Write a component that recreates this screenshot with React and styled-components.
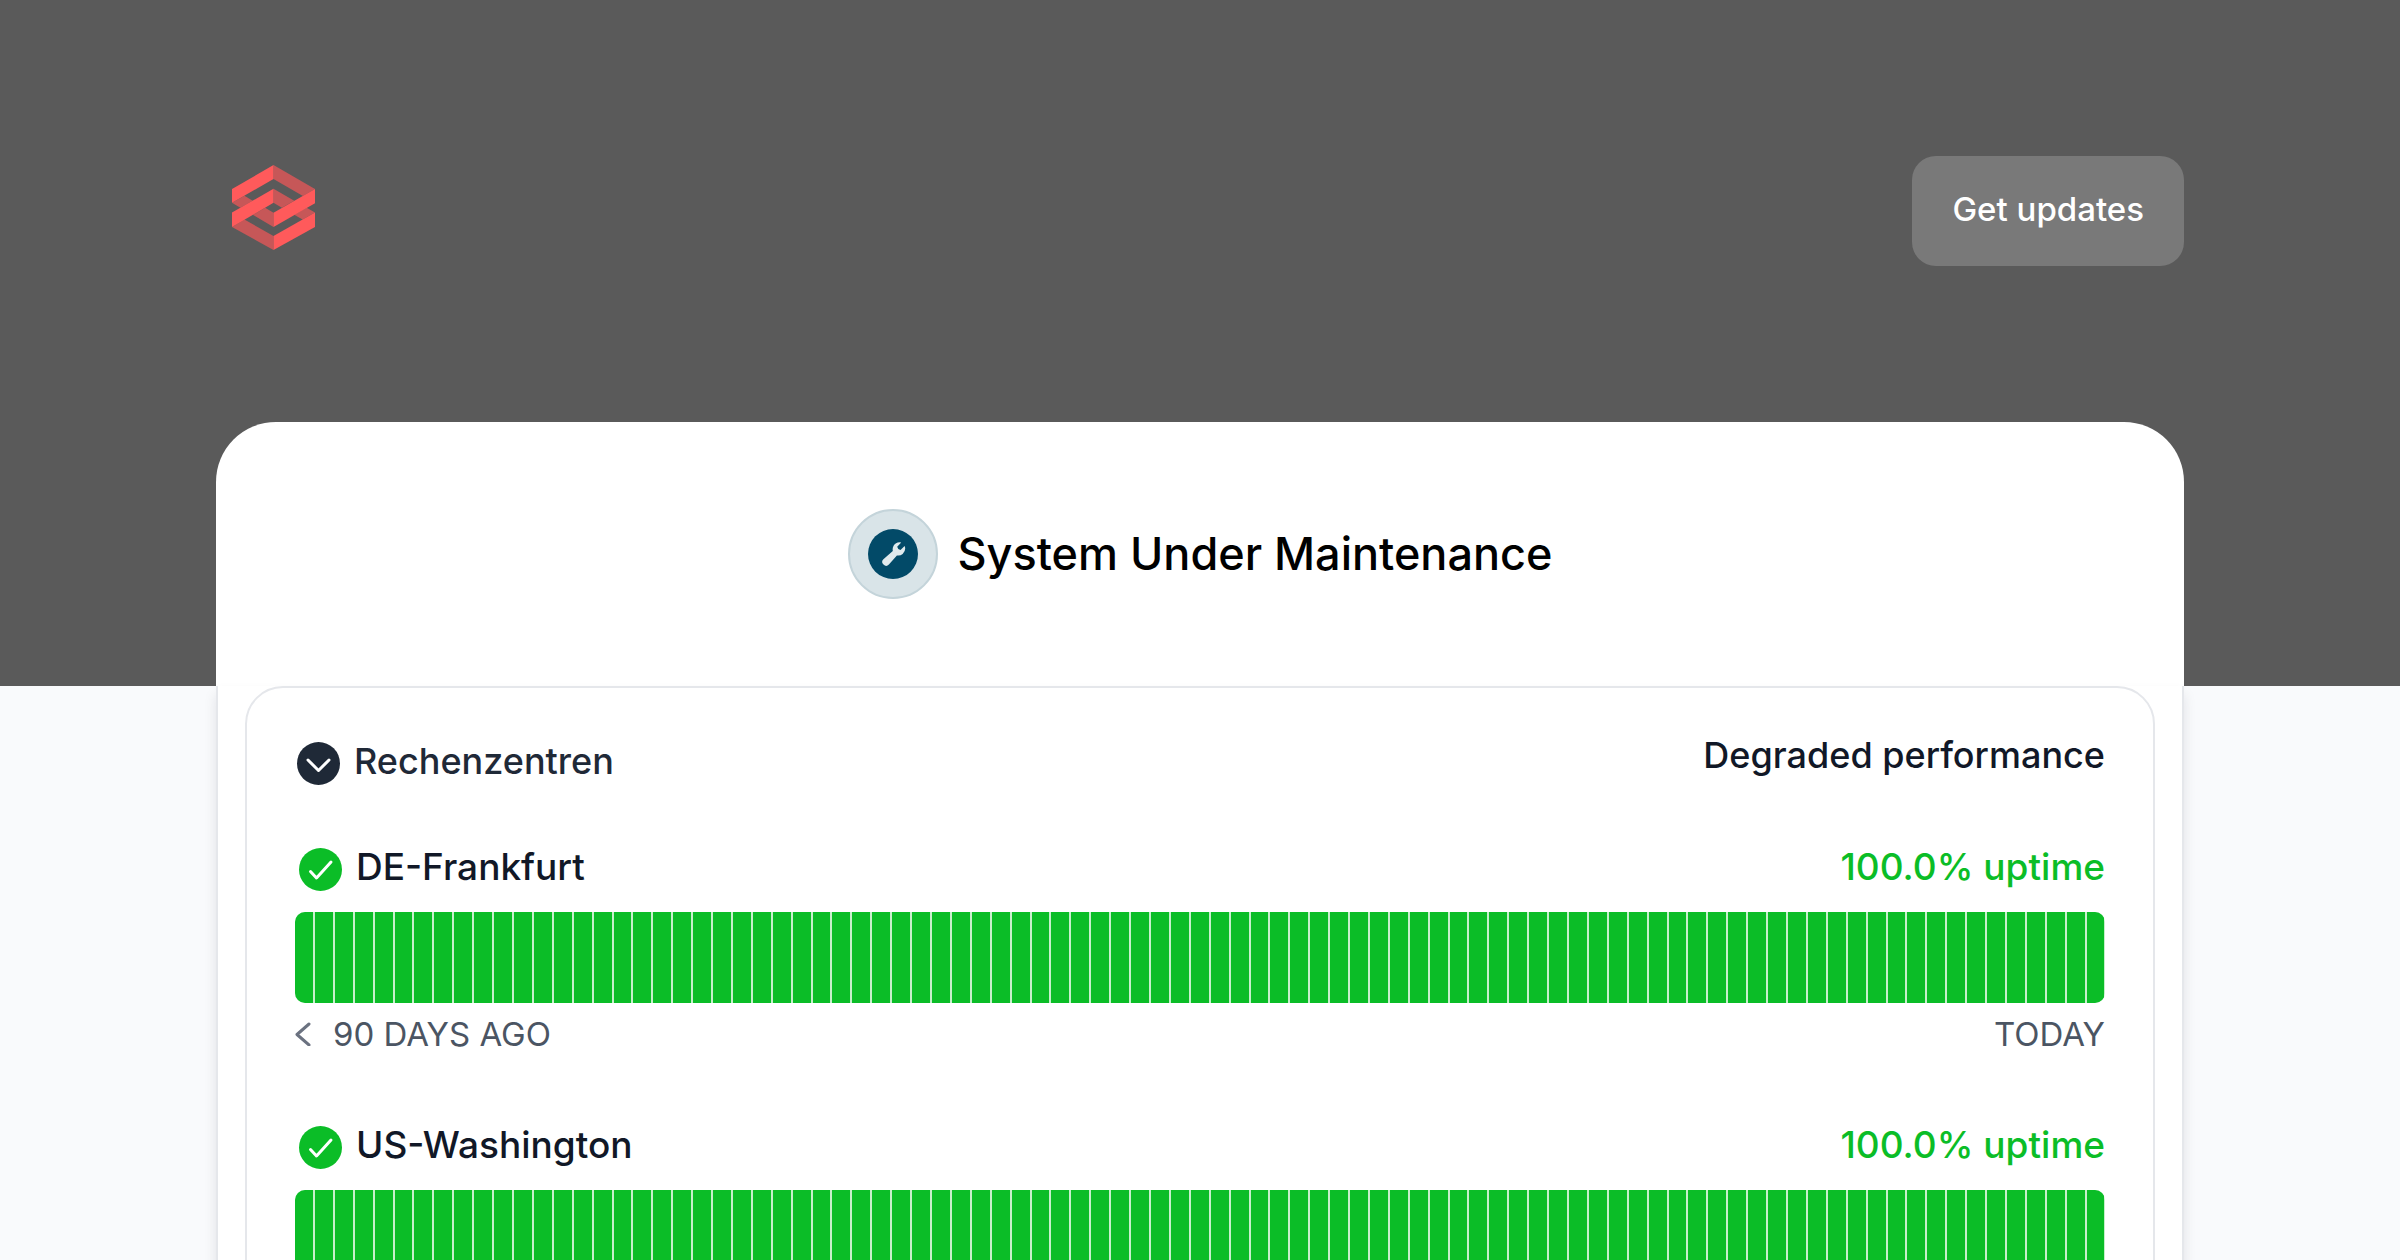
import React from "react";
import styled, { createGlobalStyle } from "styled-components";

const GlobalStyle = createGlobalStyle`
  * { box-sizing: border-box; }
  body {
    margin: 0;
    background: #f9fafc;
    color: #111827;
    font-family: Inter, "Liberation Sans", sans-serif;
    font-weight: 500;
  }
  h1, h2, h3, p { margin: 0; font-weight: 500; }
`;

const Page = styled.div`
  display: grid;
  grid-template-columns: 9% 1fr 9%;
  grid-template-rows: 422px 264px auto;
  height: 100vh;
  overflow: hidden;
`;

const Hero = styled.div`
  grid-column: 1 / -1;
  grid-row: 1 / 3;
  background: #5a5a5a;
`;

const Header = styled.header`
  grid-column: 2;
  grid-row: 1;
  display: flex;
  justify-content: space-between;
  align-items: flex-start;
  padding: 156px 0 0 16px;
`;

const LogoLink = styled.a`
  display: flex;
  padding-top: 9px;
`;

const UpdatesButton = styled.button`
  height: 110px;
  padding: 0 40px 4px;
  border: 0;
  border-radius: 24px;
  background: #797979;
  color: #fff;
  font: inherit;
  font-size: 33px;
  line-height: 40px;
`;

const Summary = styled.section`
  grid-column: 2;
  grid-row: 2;
  display: flex;
  align-items: center;
  justify-content: center;
  gap: 20px;
  border-radius: 60px 60px 0 0;
  background: #fff;
`;

const StatusBadge = styled.span`
  display: flex;
  align-items: center;
  justify-content: center;
  width: 90px;
  height: 90px;
  border: 2px solid #c4d4da;
  border-radius: 50%;
  background: #d9e4e8;
`;

const SummaryTitle = styled.h1`
  color: #000;
  font-size: 45px;
  line-height: 56px;
`;

const Body = styled.main`
  grid-column: 2;
  grid-row: 3;
  padding: 0 27px;
  border: solid #e5e7eb;
  border-width: 0 2px;
  background: #fff;
  box-shadow: 0 8px 12px rgba(17, 24, 39, 0.1);
`;

const Group = styled.section`
  padding: 46px 48px;
  border: 2px solid #e5e7eb;
  border-radius: 38px;
`;

const GroupHeader = styled.div`
  display: flex;
  justify-content: space-between;
  align-items: flex-start;
  padding-bottom: 60px;
`;

const GroupToggle = styled.button`
  display: flex;
  align-items: center;
  gap: 14px;
  padding: 6px 0 0 2px;
  border: 0;
  background: none;
  font: inherit;
`;

const tones = { ok: "#0bbd27", strong: "#111827", soft: "#1f2937" };

const Label = styled.span`
  display: block;
  padding-bottom: 4px;
  font-size: ${(p) => (p.$heading ? 36 : 37)}px;
  line-height: 42px;
  color: ${(p) => tones[p.$tone || "strong"]};
`;

const Service = styled.article`
  padding-bottom: 67px;
`;

const Row = styled.div`
  display: flex;
  justify-content: space-between;
  align-items: center;
`;

const ServiceName = styled.h3`
  display: flex;
  align-items: center;
  gap: 14px;
  padding-left: 4px;
`;

const Bars = styled.div`
  display: flex;
  gap: 2px;
  height: 91px;
  margin: 20px 0 8px;
  border-radius: 10px;
  overflow: hidden;
  background: #c6f0cb;
`;

const Day = styled.span`
  flex: 1;
  background: #0bbd27;
`;

const Caption = styled.span`
  display: flex;
  align-items: center;
  gap: 22px;
  color: #4b5563;
  font-size: 33px;
  font-weight: 400;
  line-height: 46px;
`;

const Logo = () => (
  <svg width="83" height="85" viewBox="97 76 248 254" aria-hidden="true">
    <g fill="#c65758">
      <path d="M221 76 345 148 309 169 221 118Z" />
      <path d="M221 147 283 183 246 204 221 189Z" />
      <path d="M97 189 134 168 159 183 122 204Z" />
      <path d="M221 261 159 225 196 204 221 219Z" />
      <path d="M345 218 308 239 283 225 320 204Z" />
      <path d="M97 261 134 239 221 288 221 330Z" />
    </g>
    <g fill="#ff5a5b">
      <path d="M97 148 221 76 221 118 97 189Z" />
      <path d="M97 218 221 147 221 189 97 261Z" />
      <path d="M345 148 345 190 221 261 221 219Z" />
      <path d="M345 218 345 261 221 330 221 288Z" />
    </g>
  </svg>
);

const Wrench = () => (
  <svg width="50" height="50" viewBox="0 0 50 50" aria-hidden="true">
    <circle cx="25" cy="25" r="25" fill="#024a68" />
    <path
      d="M37.200 19.500a7 7 0 0 1-8.300 6.900L20.900 35.500a3.700 3.700 0 0 1-5.500-5.300l9.400-8.300a7 7 0 0 1 8.400-8.400l-4 4.200a4 4 0 0 0 3.300 3.300l4.100-4.100c.4.800.6 1.700.6 2.600Z"
      fill="#e0eaed"
    />
  </svg>
);

const CircleIcon = ({ fill, path }) => (
  <svg width="43" height="43" viewBox="0 0 43 43" fill="none" aria-hidden="true">
    <circle cx="21.5" cy="21.5" r="21.5" fill={fill} />
    <path d={path} stroke="#fff" strokeWidth="3" strokeLinecap="round" strokeLinejoin="round" />
  </svg>
);

const ChevronLeft = () => (
  <svg width="16" height="24" viewBox="0 0 16 24" fill="none" aria-hidden="true">
    <path d="M14 2 2 12.500 14 23" stroke="#6b7280" strokeWidth="3" strokeLinecap="round" strokeLinejoin="round" />
  </svg>
);

const services = [
  { name: "DE-Frankfurt", uptime: "100.0%" },
  { name: "US-Washington", uptime: "100.0%" },
];
const days = Array.from({ length: 91 }, (_, i) => i);

export default function App() {
  return (
    <>
      <GlobalStyle />
      <Page>
        <Hero />
        <Header>
          <LogoLink href="#" aria-label="Home">
            <Logo />
          </LogoLink>
          <UpdatesButton type="button">Get updates</UpdatesButton>
        </Header>
        <Summary>
          <StatusBadge>
            <Wrench />
          </StatusBadge>
          <SummaryTitle>System Under Maintenance</SummaryTitle>
        </Summary>
        <Body>
          <Group>
            <GroupHeader>
              <GroupToggle type="button" aria-expanded="true">
                <CircleIcon fill="#1f2937" path="M11 18 21.500 28.500 32 18" />
                <Label $heading $tone="soft">Rechenzentren</Label>
              </GroupToggle>
              <Label $heading>Degraded performance</Label>
            </GroupHeader>
            {services.map((s) => (
              <Service key={s.name}>
                <Row>
                  <ServiceName>
                    <CircleIcon fill="#0bbd27" path="M11.500 23.500 17.500 30 32 14" />
                    <Label>{s.name}</Label>
                  </ServiceName>
                  <Label $tone="ok">{s.uptime} uptime</Label>
                </Row>
                <Bars>
                  {days.map((d) => (
                    <Day key={d} />
                  ))}
                </Bars>
                <Row>
                  <Caption>
                    <ChevronLeft />
                    90 DAYS AGO
                  </Caption>
                  <Caption>TODAY</Caption>
                </Row>
              </Service>
            ))}
          </Group>
        </Body>
      </Page>
    </>
  );
}
